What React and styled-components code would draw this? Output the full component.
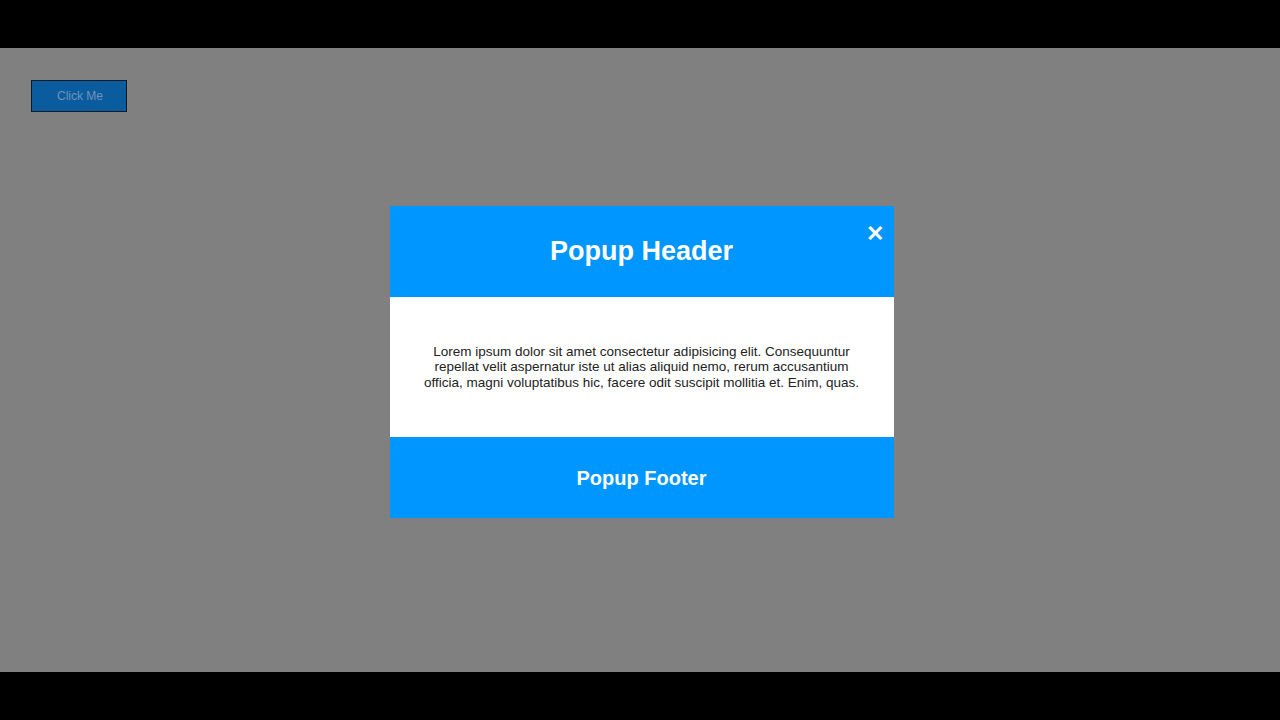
import styled, { createGlobalStyle } from "styled-components";

const GlobalStyle = createGlobalStyle`
    * { box-sizing: border-box; }
    html, body {
        margin: 0;
        padding: 0;
        width: 100%;
        height: 100%;
        font-family: "Liberation Sans", Arial, sans-serif;
    }
    #root { height: 100%; }
`

const Frame = styled.div`
    width: 100vw;
    height: 100vh;
    display: flex;
    flex-direction: column;
    background-color: #000;
`

const Letterbox = styled.div`
    height: 48px;
    flex-shrink: 0;
    background-color: #000;
`

const Stage = styled.div`
    position: relative;
    flex: 1;
    background-color: #808080;
    padding: 32px 31px;
`

const OpenButton = styled.button`
    width: 96px;
    height: 32px;
    background-color: #0a5c9e;
    border: 1px solid #101820;
    color: #6f95b8;
    font-family: "Liberation Sans", Arial, sans-serif;
    font-size: 12px;
    padding: 0 0 0 2px;
`

const Overlay = styled.div`
    position: absolute;
    inset: 0;
    display: flex;
    justify-content: center;
    align-items: center;
    padding: 4px 0 0 3px;
`

const Popup = styled.div`
    width: 504px;
    display: flex;
    flex-direction: column;
    background-color: #fff;
`

const Band = styled.div`
    position: relative;
    height: ${(props) => props.$height}px;
    background-color: #0096ff;
    color: #fff;
    display: flex;
    justify-content: center;
    align-items: center;
    padding-top: ${(props) => props.$shift || 0}px;

    h1, h2 {
        margin: 0;
        font-weight: 700;
    }
    h1 { font-size: 27px; }
    h2 { font-size: 20px; }
`

const Close = styled.span`
    position: absolute;
    top: 17px;
    right: 10px;
    font-size: 22px;
    font-weight: 700;
    line-height: 1;
    color: #fff;
    cursor: pointer;
`

const Body = styled.div`
    height: 140px;
    display: flex;
    justify-content: center;
    align-items: center;
    padding: 0 34px;

    p {
        margin: 0;
        font-size: 13.5px;
        line-height: 15.5px;
        color: #222;
        text-align: center;
    }
`

const App = () => {
    return (
        <>
            <GlobalStyle />
            <Frame>
                <Letterbox />
                <Stage>
                    <OpenButton>Click Me</OpenButton>
                    <Overlay>
                        <Popup>
                            <Band $height={91}>
                                <h1>Popup Header</h1>
                                <Close>&#x2715;</Close>
                            </Band>
                            <Body>
                                <p>
                                    Lorem ipsum dolor sit amet consectetur adipisicing elit. Consequuntur
                                    repellat velit aspernatur iste ut alias aliquid nemo, rerum accusantium
                                    officia, magni voluptatibus hic, facere odit suscipit mollitia et. Enim, quas.
                                </p>
                            </Body>
                            <Band $height={81} $shift={2}>
                                <h2>Popup Footer</h2>
                            </Band>
                        </Popup>
                    </Overlay>
                </Stage>
                <Letterbox />
            </Frame>
        </>
    )
}

export default App;
